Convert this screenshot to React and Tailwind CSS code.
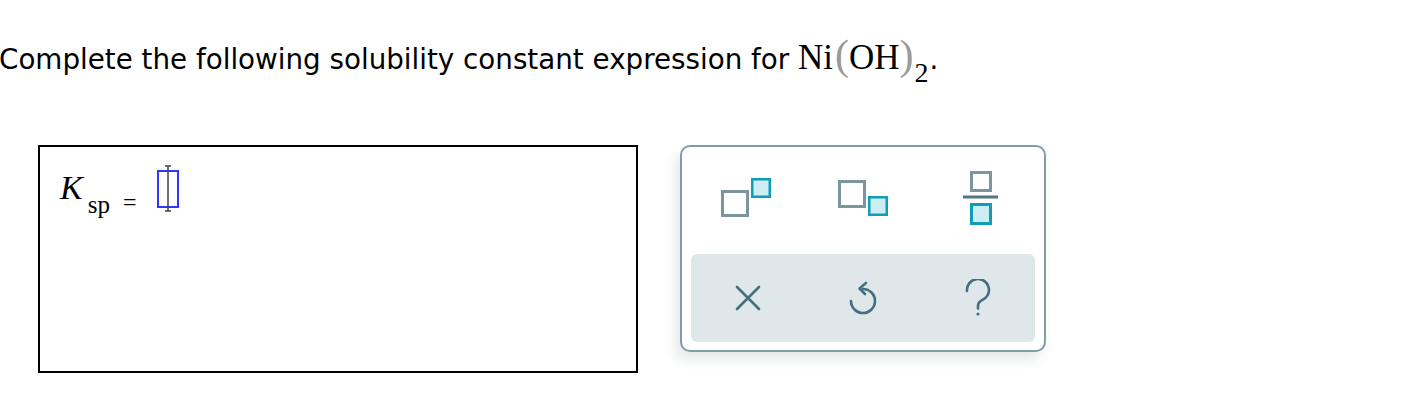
import React from "react";

const GRAY = "#7b969d";
const TEAL = "#0c9fb6";
const TEAL_FILL = "#ccedf2";
const INK = "#41707e";

function SuperscriptIcon() {
  return (
    <svg className="mr-[4px]" width="50" height="40" viewBox="0 0 50 40">
      <rect x="1.5" y="13.5" width="25" height="24" fill="none" stroke={GRAY} strokeWidth="3" />
      <rect x="31.25" y="1.25" width="17.5" height="17.5" fill={TEAL_FILL} stroke={TEAL} strokeWidth="2.5" />
    </svg>
  );
}

function SubscriptIcon() {
  return (
    <svg width="50" height="37" viewBox="0 0 50 37">
      <rect x="1.5" y="1.5" width="25" height="25" fill="none" stroke={GRAY} strokeWidth="3" />
      <rect x="31.25" y="17.25" width="17.5" height="17.5" fill={TEAL_FILL} stroke={TEAL} strokeWidth="2.5" />
    </svg>
  );
}

function FractionIcon() {
  return (
    <svg className="ml-[6px]" width="35" height="54" viewBox="0 0 35 54">
      <rect x="8.5" y="1.5" width="19" height="18" fill="none" stroke={GRAY} strokeWidth="3" />
      <rect x="0" y="24.5" width="35" height="3" fill="#56767f" />
      <rect x="8.5" y="33.5" width="19" height="19" fill={TEAL_FILL} stroke={TEAL} strokeWidth="3" />
    </svg>
  );
}

function ClearIcon() {
  return (
    <svg width="26" height="26" viewBox="0 0 26 26" fill="none" stroke={INK} strokeWidth="2.6" strokeLinecap="round">
      <path d="M2 2 L24 24 M24 2 L2 24" />
    </svg>
  );
}

function UndoIcon() {
  return (
    <svg width="30" height="34" viewBox="0 0 30 34" fill="none" stroke={INK} strokeWidth="2.6" strokeLinecap="round" strokeLinejoin="round">
      <path d="M15 8 A12 12 0 1 1 3 20" />
      <path d="M18 2 L11.5 7.5 L17 13" />
    </svg>
  );
}

function HelpIcon() {
  return (
    <svg width="26" height="38" viewBox="0 0 26 38" fill="none" stroke={INK} strokeWidth="2.6" strokeLinecap="round">
      <path d="M2 12 A11 11 0 1 1 16.8 21.3 C14.2 22.6 13 24 13 27 V29.5" />
      <circle cx="13" cy="35" r="1.6" fill={INK} stroke="none" />
    </svg>
  );
}

export default function App() {
  return (
    <div className="w-[1422px] h-[408px] bg-white overflow-hidden font-['DejaVu_Sans',sans-serif] text-black">
      <div className="h-[81px] pt-[40px] -ml-[1px] text-[27.75px] leading-[40px] whitespace-nowrap">
        Complete the following solubility constant expression for{" "}
        <span className="font-['Liberation_Serif',serif] text-[35px] leading-[0]">
          Ni
          <span className="ml-[2px] text-[42px] text-[#9a9a9a]">(</span>
          OH
          <span className="text-[42px] text-[#9a9a9a]">)</span>
          <span className="relative top-[13px] ml-[1px] text-[28px]">2</span>
        </span>
        <span className="ml-[1px]">.</span>
      </div>

      <div className="flex items-start gap-[42px] pl-[38px] mt-[64px]">
        <div className="w-[600px] h-[228px] border-2 border-black">
          <div className="flex items-start pt-[18px] pl-[20px] font-['Liberation_Serif',serif]">
            <span className="mt-[6px] text-[34px] leading-none italic">K</span>
            <span className="mt-[27px] ml-[5px] text-[25px] leading-none">sp</span>
            <span className="mt-[25px] ml-[13px] text-[24px] leading-none">=</span>
            <div className="relative ml-[21px] w-[22px] h-[47px]">
              <div className="absolute left-0 top-[5px] w-[22px] h-[38px] border-2 border-[#3333ff]" />
              <svg className="absolute left-[7px] top-0" width="8" height="47" viewBox="0 0 8 47">
                <path d="M4 1 V46 M1 1 H7 M1 46 H7" stroke="#444" strokeWidth="1.5" fill="none" />
              </svg>
            </div>
          </div>
        </div>

        <div className="w-[366px] h-[207px] rounded-[10px] border-2 border-[#7f9ea5] bg-white shadow-[-5px_8px_12px_rgba(60,80,90,0.12)] flex flex-col">
          <div className="h-[107px] grid grid-cols-3 px-[9px] pb-[5px] items-center justify-items-center">
            <SuperscriptIcon />
            <SubscriptIcon />
            <FractionIcon />
          </div>
          <div className="mx-[9px] h-[88px] rounded-[6px] bg-[#e0e7ea] grid grid-cols-3 items-center justify-items-center">
            <ClearIcon />
            <UndoIcon />
            <HelpIcon />
          </div>
        </div>
      </div>
    </div>
  );
}
